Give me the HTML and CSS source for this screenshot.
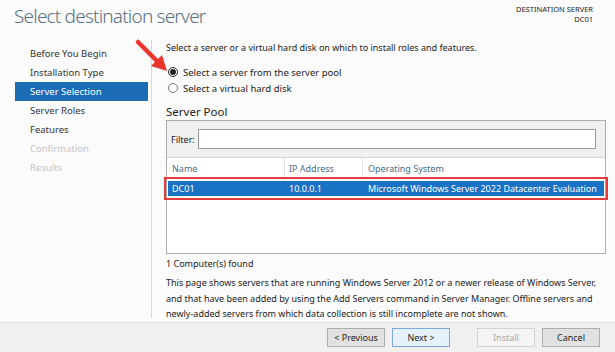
FILE: index.html
```html
<!DOCTYPE html>
<html lang="en">
<head>
    <meta charset="UTF-8">
    <title>Select destination server</title>
    <link rel="stylesheet" href="styles.css">
</head>
<body>
    <div class="wizard">
        <div class="header">
            <h1>Select destination server</h1>
            <div class="dest">DESTINATION SERVER<br>DC01</div>
        </div>

        <div class="content">
            <ul class="nav">
                <li>Before You Begin</li>
                <li>Installation Type</li>
                <li class="active">Server Selection</li>
                <li>Server Roles</li>
                <li>Features</li>
                <li class="disabled">Confirmation</li>
                <li class="disabled">Results</li>
            </ul>

            <div class="main">
                <p class="intro">Select a server or a virtual hard disk on which to install roles and features.</p>
                <label class="radio"><input type="radio" name="target" checked> Select a server from the server pool</label>
                <label class="radio"><input type="radio" name="target"> Select a virtual hard disk</label>

                <h2>Server Pool</h2>
                <div class="pool">
                    <div class="filter">
                        <span>Filter:</span>
                        <input type="text">
                    </div>
                    <div class="row head">
                        <div class="c1">Name</div>
                        <div class="c2">IP Address</div>
                        <div class="c3">Operating System</div>
                    </div>
                    <div class="row selected">
                        <div class="c1">DC01</div>
                        <div class="c2">10.0.0.1</div>
                        <div class="c3">Microsoft Windows Server 2022 Datacenter Evaluation</div>
                    </div>
                </div>

                <p class="found">1 Computer(s) found</p>
                <p class="note">This page shows servers that are running Windows Server 2012 or a newer release of Windows Server, and that have been added by using the Add Servers command in Server Manager. Offline servers and newly-added servers from which data collection is still incomplete are not shown.</p>
            </div>
        </div>

        <div class="footer">
            <button>&lt; Previous</button>
            <button class="next">Next &gt;</button>
            <button class="gap" disabled>Install</button>
            <button>Cancel</button>
        </div>

        <svg class="arrow" width="40" height="40" viewBox="0 0 40 40">
            <line x1="4" y1="4" x2="24" y2="24" stroke="#e8362d" stroke-width="4.5" stroke-linecap="round"/>
            <polygon points="33,33 17,28 28,17" fill="#e8362d"/>
        </svg>
    </div>
</body>
</html>
```

FILE: styles.css
```css
* {
    box-sizing: border-box;
}
body {
    margin: 0;
    font-family: "Noto Sans", "Open Sans", sans-serif;
    font-size: 9px;
    color: #222;
    background: #fbfbfb;
}
.wizard {
    position: relative;
    width: 615px;
    height: 352px;
    display: flex;
    flex-direction: column;
}
.header {
    flex-shrink: 0;
    height: 40px;
    display: flex;
    justify-content: space-between;
    padding: 0 22px 0 14px;
}
h1 {
    margin: 0;
    font-weight: 300;
    font-size: 19px;
    letter-spacing: -0.8px;
    line-height: 32px;
    color: #587080;
}
.dest {
    text-align: right;
    font-size: 7.5px;
    line-height: 9.5px;
    padding-top: 5px;
}
.content {
    flex: 1;
    min-height: 0;
    display: flex;
}
.nav {
    list-style: none;
    margin: 0 0 4px;
    padding: 4px 0 0 15px;
    width: 152px;
    border-right: 1px solid #d8d8d8;
}
.nav li {
    height: 19px;
    line-height: 19px;
    padding-left: 15px;
    width: 133px;
    font-size: 9.5px;
    color: #333;
}
.nav li.active {
    background: #1c6db6;
    color: #fff;
}
.nav li.disabled {
    color: #c4c4c4;
}
.main {
    flex: 1;
    padding: 0 9px 0 14px;
}
.intro {
    margin: 0;
    line-height: 15px;
}
.radio {
    display: flex;
    align-items: center;
    height: 16px;
    font-size: 9.5px;
}
.radio:first-of-type {
    margin-top: 9px;
}
.radio input {
    margin: 0 5px 0 2px;
    width: 10px;
    height: 10px;
    accent-color: #262626;
}
h2 {
    margin: 7px 0 0;
    font-weight: 400;
    font-size: 11.5px;
    line-height: 17px;
}
.pool {
    height: 134px;
    border: 1px solid #acacac;
    background: #fff;
}
.filter {
    height: 37px;
    background: #f0f0f0;
    display: flex;
    align-items: center;
    padding: 0 9px 0 4px;
    border-bottom: 1px solid #d5d5d5;
}
.filter span {
    width: 27px;
}
.filter input {
    flex: 1;
    height: 20px;
    border: 1px solid #9a9a9a;
    background: #fff;
}
.row {
    display: flex;
    height: 15px;
    align-items: center;
    padding-left: 5px;
    white-space: nowrap;
}
.row.head {
    height: 22px;
    color: #4a6b86;
    margin-bottom: 1px;
}
.row.head div {
    height: 100%;
    line-height: 22px;
    border-right: 1px solid #e3e3e3;
}
.row.head .c3 {
    border-right: none;
}
.c1 {
    width: 113px;
}
.c2 {
    width: 78px;
    padding-left: 4px;
}
.c3 {
    flex: 1;
    padding-left: 5px;
}
.row.selected {
    background: #1a72c4;
    color: #fff;
    margin: 0 1px;
    padding-left: 4px;
    outline: 2px solid #e23c3c;
    outline-offset: 2px;
}
.found {
    margin: 2px 0 0;
    line-height: 15px;
}
.note {
    margin: 4px 0 0;
    line-height: 15.5px;
}
.footer {
    flex-shrink: 0;
    height: 30px;
    background: #f0f0f0;
    border-top: 1px solid #e2e2e2;
    display: flex;
    justify-content: flex-end;
    align-items: center;
    padding-right: 15px;
    gap: 7px;
}
.footer button {
    width: 58px;
    height: 19px;
    font-family: inherit;
    font-size: 9px;
    color: #1e1e1e;
    background: #e1e1e1;
    border: 1px solid #adadad;
    padding: 0;
}
.footer .next {
    background: #e5f1fb;
    border-color: #7ea8d8;
}
.footer .gap {
    margin-left: 20px;
    background: #f4f4f4;
    border-color: #d4d4d4;
    color: #a8a8a8;
}
.arrow {
    position: absolute;
    left: 134px;
    top: 38px;
}
```
